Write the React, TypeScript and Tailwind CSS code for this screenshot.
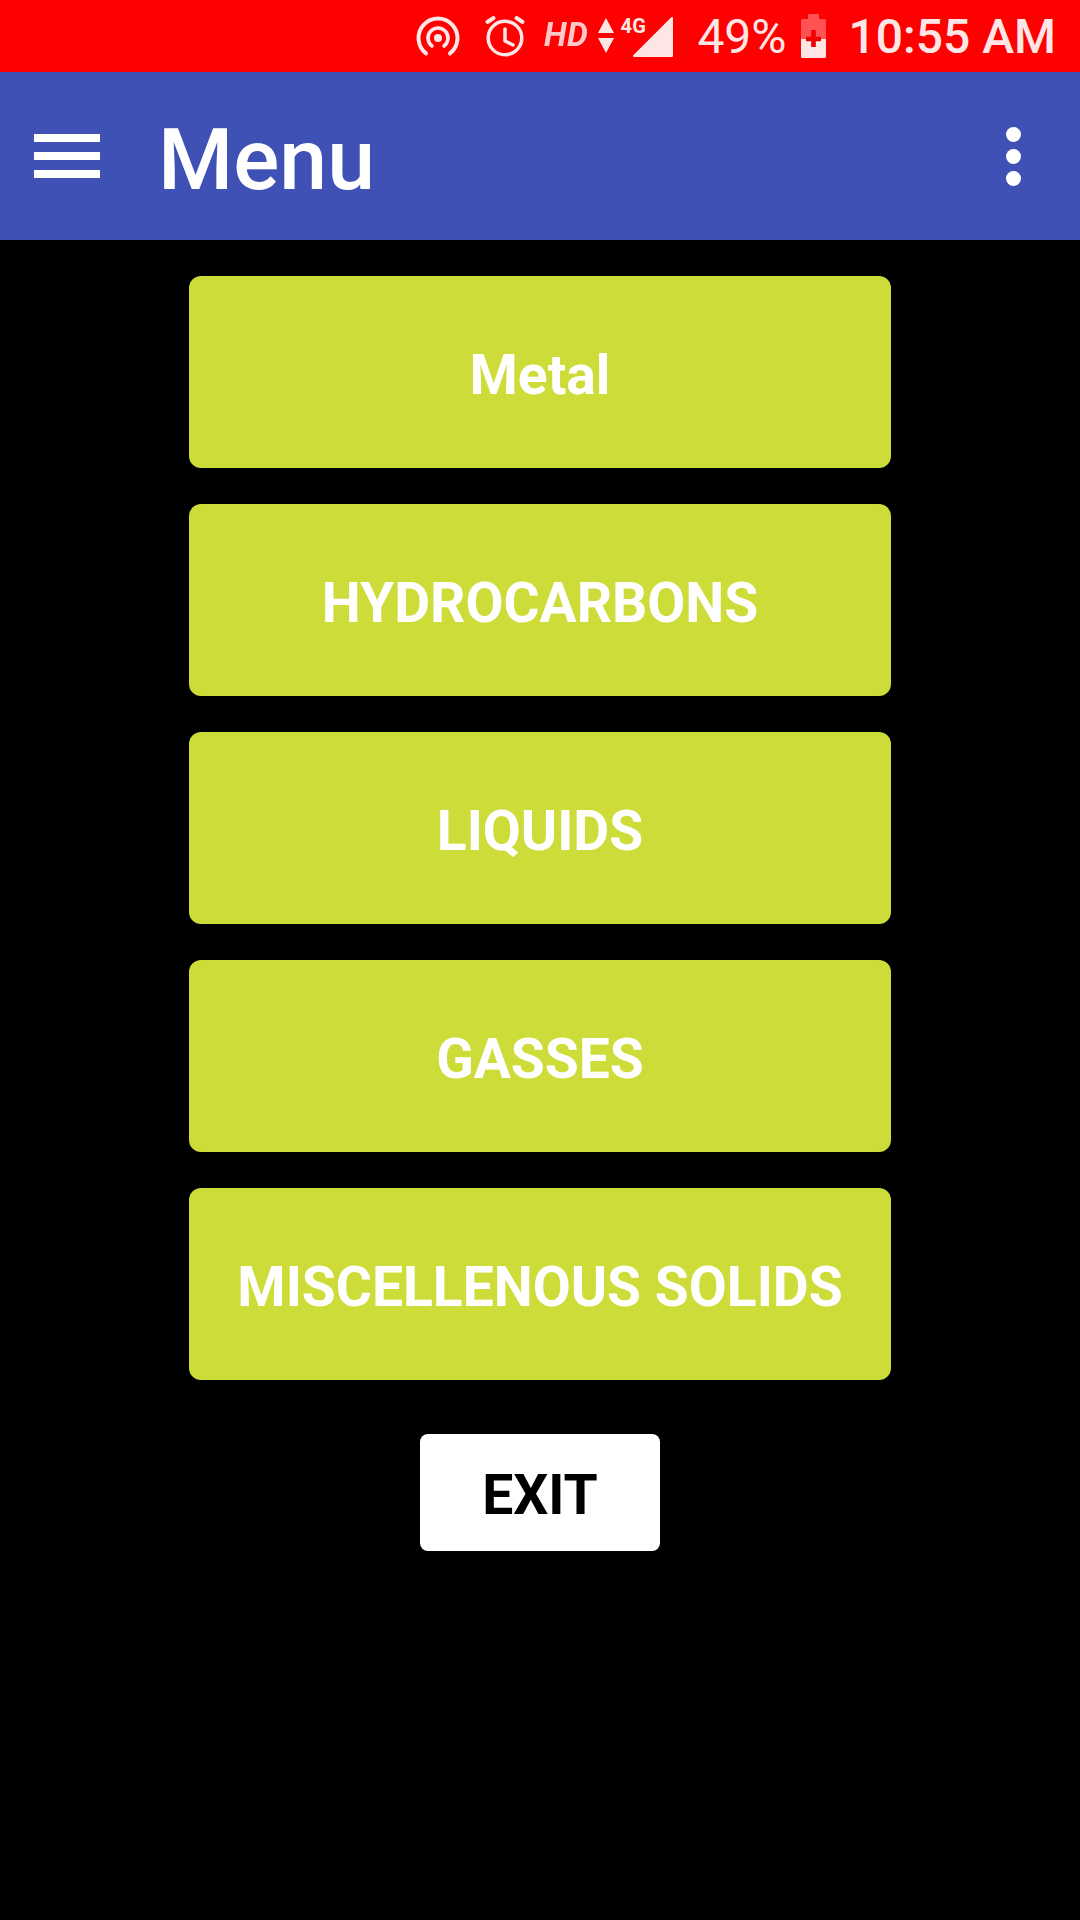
const menuItems = ["Metal", "HYDROCARBONS", "LIQUIDS", "GASSES", "MISCELLENOUS SOLIDS"]

function HotspotIcon() {
  return (
    <svg width="48" height="48" viewBox="0 0 48 48" fill="none" stroke="#ffe6e6" strokeWidth="4" strokeLinecap="round">
      <path d="M12 41.4 A19.5 19.5 0 1 1 36 41.4" />
      <path d="M18 34 A10 10 0 1 1 30 34" strokeWidth="3.6" />
      <circle cx="24" cy="26" r="4" fill="#ffe6e6" stroke="none" />
    </svg>
  )
}

function AlarmIcon() {
  return (
    <svg width="44" height="48" viewBox="0 0 44 48" fill="none" stroke="#ffe6e6" strokeWidth="3.5" strokeLinecap="round" strokeLinejoin="round">
      <circle cx="22" cy="26" r="16.8" />
      <path d="M4.5 10 L10.5 6" strokeWidth="4" />
      <path d="M33.5 6 L39.5 10" strokeWidth="4" />
      <path d="M22 17 V29 L30 33" />
    </svg>
  )
}

function ArrowsIcon() {
  return (
    <svg width="16" height="36" viewBox="0 0 16 36" fill="#ffe6e6">
      <path d="M8 0 L16 15 H0 Z" />
      <path d="M0 20 H16 L8 35 Z" />
    </svg>
  )
}

function SignalIcon() {
  return (
    <svg width="42" height="42" viewBox="0 0 42 42" fill="#ffe6e6" stroke="#ffe6e6" strokeWidth="2" strokeLinejoin="round">
      <path d="M40 2 V40 H2 Z" />
    </svg>
  )
}

function BatteryIcon() {
  return (
    <svg width="25" height="44" viewBox="0 0 25 44">
      <path d="M7 0 H18 V5 H23.5 A1.5 1.5 0 0 1 25 6.5 V25 H0 V6.5 A1.5 1.5 0 0 1 1.5 5 H7 Z" fill="#ff5252" />
      <path d="M0 25 H25 V42.5 A1.5 1.5 0 0 1 23.5 44 H1.5 A1.5 1.5 0 0 1 0 42.5 Z" fill="#ffe6e6" />
      <path d="M10.2 16 H14.8 V22.8 H20 V27.2 H14.8 V33 H10.2 V27.2 H5 V22.8 H10.2 Z" fill="#f00000" />
    </svg>
  )
}

function StatusBar() {
  return (
    <div className="h-[72px] bg-[#ff0000] flex items-center justify-end pr-[24px] text-[#ffe6e6] text-[48px] leading-none [font-family:Roboto,sans-serif]">
      <HotspotIcon />
      <div className="ml-[21px]"><AlarmIcon /></div>
      <span className="ml-[17px] mb-[3px] text-[33px] font-bold italic text-[#ffc8c8] tracking-[0.5px] [filter:blur(0.5px)]">HD</span>
      <div className="ml-[10px]"><ArrowsIcon /></div>
      <div className="relative w-[60px] h-[44px]">
        <span className="absolute left-[6px] top-[2px] text-[20px] font-bold tracking-[0.5px]">4G</span>
        <div className="absolute right-0 top-[2px]"><SignalIcon /></div>
      </div>
      <span className="ml-[23px] pt-[2px]">49%</span>
      <div className="ml-[15px]"><BatteryIcon /></div>
      <span className="ml-[22px] pt-[2px] font-medium">10:55 AM</span>
    </div>
  )
}

function AppBar() {
  return (
    <div className="h-[168px] bg-[#3f51b5] flex items-center text-white [font-family:Roboto,sans-serif]">
      <div className="ml-[34px] w-[66px] flex flex-col gap-[10px]">
        <div className="h-[8px] bg-white" />
        <div className="h-[8px] bg-white" />
        <div className="h-[8px] bg-white" />
      </div>
      <h1 className="ml-[58px] pt-[7px] text-[86px] leading-none font-medium">Menu</h1>
      <div className="ml-auto mr-[59px] flex flex-col gap-[7px]">
        <div className="w-[15px] h-[15px] rounded-full bg-white" />
        <div className="w-[15px] h-[15px] rounded-full bg-white" />
        <div className="w-[15px] h-[15px] rounded-full bg-white" />
      </div>
    </div>
  )
}

export default function App() {
  return (
    <div className="w-[1080px] h-[1920px] bg-black overflow-hidden">
      <StatusBar />
      <AppBar />
      <div className="flex flex-col items-center pt-[36px] [font-family:Roboto,sans-serif]">
        <div className="flex flex-col gap-[36px]">
          {menuItems.map((item) => (
            <button key={item} className="w-[702px] h-[192px] pt-[7px] rounded-[12px] bg-[#cddc39] text-white text-[55.2px] leading-none font-bold">
              {item}
            </button>
          ))}
        </div>
        <button className="mt-[54px] w-[240px] h-[117px] pt-[7px] rounded-[8px] bg-white text-black text-[55.2px] leading-none font-bold">
          EXIT
        </button>
      </div>
    </div>
  )
}
